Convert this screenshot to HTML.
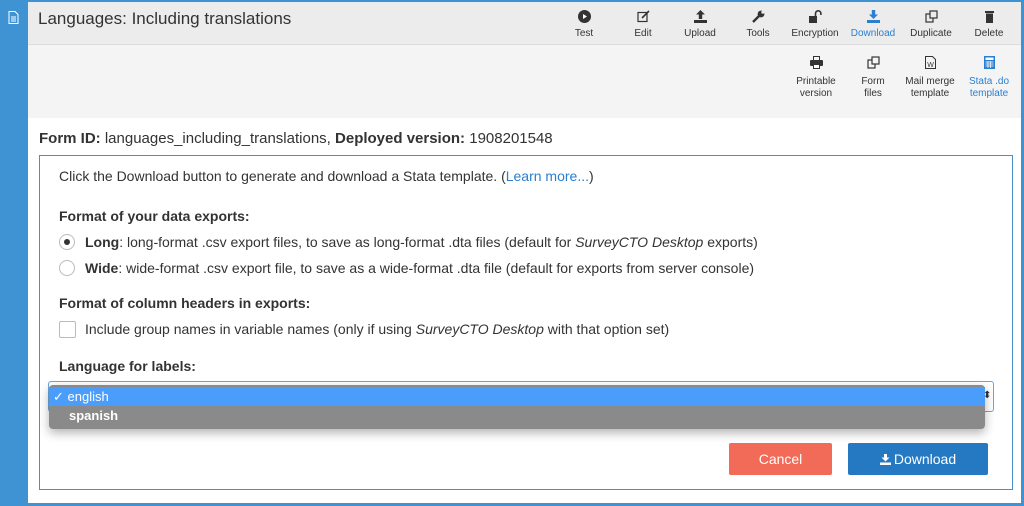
<!DOCTYPE html>
<html><head><meta charset="utf-8"><style>
body{margin:0;width:1024px;height:506px;position:relative;overflow:hidden;font-family:"Liberation Sans",sans-serif;background:#fff;color:#333}
.a{position:absolute}
.tb{position:absolute;width:60px;text-align:center;font-size:10px;color:#333;line-height:12px}
.tb svg{display:block;margin:0 auto 3px}
.blue{color:#2a7fd0}
.t{position:absolute;left:59px;font-size:14px;white-space:nowrap;color:#333}
.radio{position:absolute;left:59px;width:14px;height:14px;border:1px solid #bbb;border-radius:50%;background:#fff}
</style></head><body>
<div class="a" style="left:0;top:0;width:28px;height:506px;background:#3f93d2"></div>
<div class="a" style="left:0;top:0;width:1024px;height:2px;background:#3f93d2"></div>
<svg class="a" style="left:8px;top:11px" width="11" height="13" viewBox="0 0 11 13"><path d="M1 .5h6l3 3v9H1z" fill="none" stroke="#fff"/><path d="M3 6h5M3 8h5M3 10h5" stroke="#fff"/></svg>
<div class="a" style="left:28px;top:2px;width:996px;height:42px;background:#ececec;border-bottom:1px solid #ddd"></div>
<div class="a" style="left:28px;top:45px;width:996px;height:73px;background:#f4f4f4"></div>
<div class="a" style="left:1021px;top:0;width:3px;height:506px;background:#3f93d2"></div>
<div class="a" style="left:0;top:503px;width:1024px;height:3px;background:#3f93d2"></div>
<div class="a" style="left:38px;top:9px;font-size:17px;color:#333">Languages: Including translations</div>

<div class="tb" style="left:554px;top:10px"><svg width="13" height="13"><circle cx="6.5" cy="6.5" r="6.5" fill="#333"/><path d="M5 4l4 2.5L5 9z" fill="#fff"/></svg><div style="margin-top:5px">Test</div></div>
<div class="tb" style="left:613px;top:10px"><svg width="13" height="13"><rect x="1" y="2.5" width="9" height="9" fill="none" stroke="#333" stroke-width="1.2"/><path d="M5 8l7-7" stroke="#333" stroke-width="1.6"/></svg><div style="margin-top:5px">Edit</div></div>
<div class="tb" style="left:670px;top:10px"><svg width="13" height="13"><path d="M6.5 0l4.5 4.5H8.2v4.5H4.8V4.5H2z" fill="#333"/><rect x="0" y="10" width="13" height="3" fill="#333"/></svg><div style="margin-top:5px">Upload</div></div>
<div class="tb" style="left:728px;top:10px"><svg width="13" height="13"><path d="M1 12l6.5-6.5" stroke="#333" stroke-width="2.4"/><circle cx="9" cy="4" r="3.4" fill="#333"/><circle cx="10.8" cy="2.2" r="1.5" fill="#ececec"/></svg><div style="margin-top:5px">Tools</div></div>
<div class="tb" style="left:785px;top:10px"><svg width="13" height="13"><rect x="0" y="6" width="8" height="7" fill="#333"/><path d="M6.5 6V3.5a2.7 2.7 0 015.4 0V5" fill="none" stroke="#333" stroke-width="1.6"/></svg><div style="margin-top:5px">Encryption</div></div>
<div class="tb blue" style="left:843px;top:10px"><svg width="13" height="13"><path d="M6.5 9l4.5-4.5H8.2V0H4.8v4.5H2z" fill="#2a7fd0"/><rect x="0" y="10" width="13" height="3" fill="#2a7fd0"/></svg><div style="margin-top:5px">Download</div></div>
<div class="tb" style="left:901px;top:10px"><svg width="13" height="13"><rect x="1" y="4" width="7" height="8" fill="none" stroke="#333" stroke-width="1.2"/><rect x="5" y="1" width="7" height="7" fill="#ececec" stroke="#333" stroke-width="1.2"/></svg><div style="margin-top:5px">Duplicate</div></div>
<div class="tb" style="left:959px;top:10px"><svg width="13" height="13"><rect x="2" y="1" width="9" height="2" fill="#333"/><rect x="3" y="3.5" width="7" height="9.5" fill="#333"/></svg><div style="margin-top:5px">Delete</div></div>

<div class="tb" style="left:786px;top:56px"><svg width="13" height="13"><rect x="3.5" y="0.5" width="6" height="4" fill="none" stroke="#333"/><rect x="0" y="4" width="13" height="6" rx="1" fill="#333"/><rect x="3.5" y="8.5" width="6" height="4" fill="#fff" stroke="#333"/></svg><div style="margin-top:7px">Printable<br>version</div></div>
<div class="tb" style="left:843px;top:56px"><svg width="13" height="13"><rect x="1" y="4" width="7" height="8" fill="none" stroke="#333" stroke-width="1.2"/><rect x="5" y="1" width="7" height="7" fill="#f4f4f4" stroke="#333" stroke-width="1.2"/></svg><div style="margin-top:7px">Form<br>files</div></div>
<div class="tb" style="left:900px;top:56px"><svg width="13" height="13"><path d="M1.5.5h7l3 3v9h-10z" fill="none" stroke="#333"/><text x="3.3" y="11" font-size="7" fill="#333" font-family="Liberation Sans">W</text></svg><div style="margin-top:7px">Mail merge<br>template</div></div>
<div class="tb blue" style="left:959px;top:56px"><svg width="13" height="13"><rect x="1" y="0" width="11" height="13" fill="#2a7fd0"/><rect x="2.5" y="1.5" width="8" height="2.5" fill="#fff"/><path d="M2.5 6h8M2.5 8h8M2.5 10h8M5 5v7M7.5 5v7" stroke="#fff" stroke-width=".7"/></svg><div style="margin-top:7px">Stata .do<br>template</div></div>

<div class="a" style="left:39px;top:130px;font-size:15px;color:#333"><b>Form ID:</b> languages_including_translations, <b>Deployed version:</b> 1908201548</div>
<div class="a" style="left:39px;top:155px;width:972px;height:333px;border:1px solid #4a90c8"></div>
<div class="t" style="top:168px">Click the Download button to generate and download a Stata template. (<span class="blue">Learn more...</span>)</div>
<div class="t" style="top:208px;font-weight:bold">Format of your data exports:</div>
<div class="radio" style="top:234px"><div style="position:absolute;left:4px;top:4px;width:6px;height:6px;border-radius:50%;background:#333"></div></div>
<div class="t" style="left:85px;top:234px"><b>Long</b>: long-format .csv export files, to save as long-format .dta files (default for <i>SurveyCTO Desktop</i> exports)</div>
<div class="radio" style="top:260px"></div>
<div class="t" style="left:85px;top:260px"><b>Wide</b>: wide-format .csv export file, to save as a wide-format .dta file (default for exports from server console)</div>
<div class="t" style="top:295px;font-weight:bold">Format of column headers in exports:</div>
<div class="a" style="left:59px;top:321px;width:15px;height:15px;border:1px solid #bbb;border-radius:2px"></div>
<div class="t" style="left:85px;top:321px">Include group names in variable names (only if using <i>SurveyCTO Desktop</i> with that option set)</div>
<div class="t" style="top:358px;font-weight:bold">Language for labels:</div>
<div class="a" style="left:48px;top:381px;width:944px;height:29px;border:1px solid #6aa6d8;border-radius:3px"></div>
<div class="a" style="left:983px;top:390px;font-size:10px;color:#333">⬍</div>
<div class="a" style="left:49px;top:385px;width:936px;height:44px;background:#8a8a8b;border-radius:4px;box-shadow:0 4px 10px rgba(0,0,0,.3)"></div>
<div class="a" style="left:49px;top:387px;width:936px;height:19px;background:#4a9dfb"></div>
<div class="a" style="left:53px;top:389px;font-size:13px;color:#fff">✓ english</div>
<div class="a" style="left:69px;top:408px;font-size:13px;color:#fff;font-weight:bold">spanish</div>
<div class="a" style="left:729px;top:443px;width:103px;height:32px;background:#f26a58;border-radius:2px;color:#fff;font-size:14px;text-align:center;line-height:32px">Cancel</div>
<div class="a" style="left:848px;top:443px;width:140px;height:32px;background:#2479c2;border-radius:2px;color:#fff;font-size:14px;text-align:center;line-height:32px"><svg width="11" height="11" style="vertical-align:-1px;margin-right:3px"><path d="M5.5 7.5l4-4H7V0H4v3.5H1.5z" fill="#fff"/><rect x="0" y="8.5" width="11" height="2.5" fill="#fff"/></svg>Download</div>
</body></html>
